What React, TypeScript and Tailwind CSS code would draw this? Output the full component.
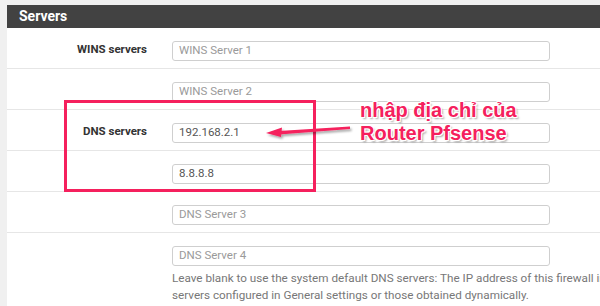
const rows = [
  { label: "WINS servers", value: "", placeholder: "WINS Server 1" },
  { label: "", value: "", placeholder: "WINS Server 2" },
  { label: "DNS servers", value: "192.168.2.1", placeholder: "DNS Server 1" },
  { label: "", value: "8.8.8.8", placeholder: "DNS Server 2" },
  { label: "", value: "", placeholder: "DNS Server 3" },
  { label: "", value: "", placeholder: "DNS Server 4" },
];

function Field({ value, placeholder }: { value: string; placeholder: string }) {
  return (
    <div className="w-[378px] h-[20px] rounded-[3px] border border-[#cfcfcf] bg-white flex items-center px-[6px] text-[11.5px] leading-none">
      {value ? (
        <span className="text-[#555]">{value}</span>
      ) : (
        <span className="text-[#9a9a9a]">{placeholder}</span>
      )}
    </div>
  );
}

export default function App() {
  return (
    <div
      className="relative w-[600px] h-[306px] overflow-hidden bg-[#f0f0f0] pt-[5px] pl-[7px]"
      style={{ fontFamily: "Roboto, 'Liberation Sans', sans-serif" }}
    >
      <div className="bg-white h-full">
        <div className="h-[23px] bg-[#424242] flex items-center pl-[12px] text-white font-bold text-[14px]">
          Servers
        </div>

        {rows.map((r, i) => (
          <div
            key={i}
            className="flex border-b border-[#e6e6e6] pt-[13px] pb-[7px]"
          >
            <div className="w-[140px] shrink-0 text-right font-bold text-[11.5px] text-[#333] leading-[20px] -mt-[2px]">
              {r.label}
            </div>
            <div className="pl-[25px]">
              <Field value={r.value} placeholder={r.placeholder} />
              {i === rows.length - 1 && (
                <div className="mt-[4px] text-[11.7px] leading-[17px] text-[#777] whitespace-nowrap">
                  <div>
                    Leave blank to use the system default DNS servers: The IP
                    address of this firewall interface if DNS Resolver or
                    Forwarder is enabled, otherwise the
                  </div>
                  <div>
                    servers configured in General settings or those obtained
                    dynamically.
                  </div>
                </div>
              )}
            </div>
          </div>
        ))}
      </div>

      {/* annotation overlay */}
      <div className="absolute left-[64px] top-[100px] w-[252px] h-[92px] border-[3px] border-[#f5205d]" />

      <svg
        className="absolute left-0 top-0"
        width="600"
        height="306"
        viewBox="0 0 600 306"
      >
        <defs>
          <filter id="sh" x="-20%" y="-50%" width="140%" height="200%">
            <feDropShadow dx="1.5" dy="2" stdDeviation="1.2" floodColor="#000" floodOpacity="0.35" />
          </filter>
        </defs>
        <g filter="url(#sh)" fill="#f5205d">
          <polygon points="350,126.5 350,129 279,134.5 279,131" />
          <polygon points="266,133 282,127.5 281,137" />
        </g>
      </svg>

      <div
        className="absolute left-[360px] top-[99px] text-[20px] leading-[23px] font-bold text-[#f5205d]"
        style={{
          fontFamily: "'Liberation Sans', Arial, sans-serif",
          textShadow:
            "1px 1px 0 #fff, -1px -1px 0 #fff, 1px -1px 0 #fff, -1px 1px 0 #fff, 2px 2px 2px rgba(0,0,0,0.35)",
        }}
      >
        <div>nhập địa chỉ của</div>
        <div>Router Pfsense</div>
      </div>
    </div>
  );
}
